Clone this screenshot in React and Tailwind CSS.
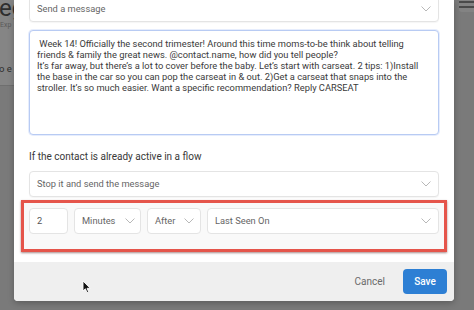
import React from "react";

function Chevron({ className = "" }) {
  return (
    <svg width="10" height="6" viewBox="0 0 10 6" className={className} fill="none">
      <path d="M0.8 0.8 L5 5 L9.2 0.8" stroke="#b8b8b8" strokeWidth="1" strokeLinecap="round" strokeLinejoin="round" />
    </svg>
  );
}

function Select({ label, className = "" }) {
  return (
    <div className={`flex items-center justify-between h-[26px] bg-white border border-[#e4e4e4] rounded-[4px] shadow-[0_1px_1px_rgba(0,0,0,0.04)] pl-[7px] pr-[7px] ${className}`}>
      <span className="text-[9.3px] text-[#666]">{label}</span>
      <Chevron />
    </div>
  );
}

export default function App() {
  const lines = [
    "\u00a0Week 14! Officially the second trimester! Around this time moms-to-be think about telling",
    "friends & family the great news. @contact.name, how did you tell people?",
    "It\u2019s far away, but there\u2019s a lot to cover before the baby. Let\u2019s start with carseat. 2 tips: 1)Install",
    "the base in the car so you can pop the carseat in & out. 2)Get a carseat that snaps into the",
    "stroller. It\u2019s so much easier. Want a specific recommendation? Reply CARSEAT",
  ];
  return (
    <div className="relative w-[474px] h-[310px] overflow-hidden flex bg-[#7a7a7a] font-['Roboto',sans-serif]">
      {/* background page, left */}
      <div className="w-[14px] flex flex-col overflow-hidden">
        <div className="h-[86px] bg-[#858585] border-b border-[#6f6f6f] flex flex-col">
          <span className="text-[24px] leading-[20px] text-[#2e2e2e] -ml-[1px] -mt-[2px] whitespace-nowrap">eg</span>
          <span className="text-[7px] leading-[8px] text-[#5a5a5a] mt-[3px] whitespace-nowrap">Exp</span>
          <span className="text-[9.5px] leading-[10px] text-[#2e2e2e] mt-[35px] -ml-[1px] whitespace-nowrap">o e</span>
        </div>
      </div>

      {/* modal */}
      <div className="w-[440px] h-[301px] bg-white rounded-b-[4px] flex flex-col shadow-[0_2px_6px_rgba(0,0,0,0.25)] overflow-hidden">
        <div className="px-[15px] flex flex-col">
          <Select label="Send a message" className="-mt-[4px]" />
          <div className="mt-[8px] h-[105px] border border-[#b8cbf3] rounded-[4px] bg-white shadow-[0_0_0_1px_rgba(200,215,250,0.45)] px-[7px] pt-[7px] text-[9.3px] leading-[11px] text-[#3a3a3a]">
            {lines.map((l, i) => (
              <div key={i} className="whitespace-nowrap">{l}</div>
            ))}
          </div>
          <div className="mt-[16px] text-[10px] leading-[12px] text-[#383838]">If the contact is already active in a flow</div>
          <Select label="Stop it and send the message" className="mt-[8px]" />
          <div className="mt-[3px] -mx-[8px] border-[3px] border-[#e5554b] bg-[#f9f9f9] shadow-[0_1px_2px_rgba(80,20,20,0.5)] px-[5px] pt-[5px] pb-[15px] flex gap-[6px]">
            <div className="w-[39px] h-[26px] bg-white border border-[#e4e4e4] rounded-[4px] flex items-center pl-[7px] text-[9.3px] text-[#555]">2</div>
            <div className="w-[67px] h-[26px] bg-white border border-[#e4e4e4] rounded-[4px] flex items-center justify-between pl-[7px] pr-[5px] text-[9.3px] text-[#666]">
              <span>Minutes</span>
              <Chevron />
            </div>
            <div className="w-[54px] h-[26px] bg-white border border-[#e4e4e4] rounded-[4px] flex items-center justify-between pl-[7px] pr-[6px] text-[9.3px] text-[#666]">
              <span>After</span>
              <Chevron />
            </div>
            <div className="flex-1 h-[26px] bg-white border border-[#e4e4e4] rounded-[4px] flex items-center justify-between pl-[7px] pr-[7px] text-[9.3px] text-[#666]">
              <span>Last Seen On</span>
              <Chevron />
            </div>
          </div>
        </div>
        <div className="mt-[10px] flex-1 bg-[#efefef] flex items-center justify-end pr-[7px]">
          <span className="text-[10px] text-[#6a6a6a] mr-[18px]">Cancel</span>
          <div className="w-[44px] h-[25px] rounded-[4px] bg-[#2d7fd4] flex items-center justify-center text-white text-[10px] font-medium">Save</div>
        </div>
      </div>

      {/* background page, right */}
      <div className="flex-1 flex justify-end">
        <div className="w-[15px] h-[14px] -mt-[2px] bg-[#838383] rounded-bl-[3px] flex flex-col gap-[3px] pt-[3px]">
          <div className="h-[2px] bg-[#4a4a4a]" />
          <div className="h-[2px] bg-[#4a4a4a]" />
        </div>
      </div>

      {/* mouse cursor */}
      <svg className="absolute left-[82px] top-[280px]" width="9" height="14" viewBox="0 0 9 14">
        <path d="M1 1 L1 11 L3.4 8.8 L5 12.6 L6.6 11.9 L5.1 8.3 L8.2 8.3 Z" fill="#111" stroke="#fff" strokeWidth="0.9" strokeLinejoin="round" />
      </svg>
    </div>
  );
}
